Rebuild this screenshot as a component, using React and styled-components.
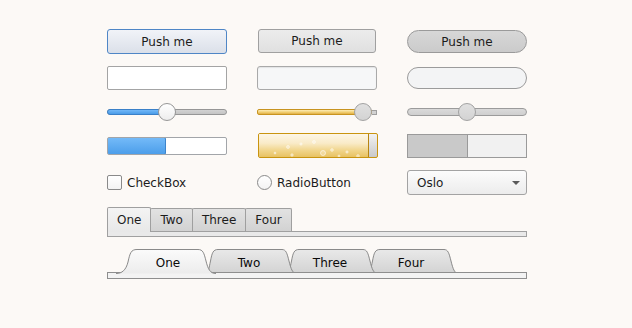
import React from "react";
import styled, { createGlobalStyle, css } from "styled-components";

const GlobalStyle = createGlobalStyle`
  html, body { margin: 0; background: #fcf9f6; }
  body {
    font-family: "DejaVu Sans", "Noto Sans", sans-serif;
    font-size: 12px;
    color: #1c1c1c;
  }
`;

const Page = styled.div`
  padding: 29px 0 0 107px;
  width: 420px;
`;

const Grid = styled.div`
  display: grid;
  grid-template-columns: repeat(3, 120px);
  grid-template-rows: 25px 24px 20px 24px 25px;
  column-gap: 30px;
  row-gap: 12px;
`;

/* ---------- buttons ---------- */
const Button = styled.button`
  font: inherit;
  color: #1c1c1c;
  padding: 0;
  margin: 0;
  width: 120px;
  box-sizing: border-box;
  ${({ $kind }) =>
    $kind === "focus"
      ? css`
          height: 25px;
          border: 1px solid #4f86c6;
          border-radius: 3px;
          background: linear-gradient(#f1f3f8, #dbe0e9);
        `
      : $kind === "flat"
      ? css`
          height: 24px;
          width: 118px;
          margin-left: 1px;
          border: 1px solid #a0a0a0;
          border-radius: 3px;
          background: linear-gradient(#ececec, #e0e0e0);
        `
      : css`
          height: 23px;
          margin-top: 1px;
          border: 1px solid #9a9a9a;
          border-radius: 12px;
          background: linear-gradient(#d7d7d7, #cbcbcb);
        `}
`;

/* ---------- line edits ---------- */
const LineEdit = styled.div`
  box-sizing: border-box;
  width: 120px;
  ${({ $kind }) =>
    $kind === "plain"
      ? css`
          height: 24px;
          border: 1px solid #a4a4a4;
          border-radius: 2px;
          background: #ffffff;
        `
      : $kind === "soft"
      ? css`
          height: 24px;
          border: 1px solid #a9a9a9;
          border-radius: 3px;
          background: #f6f7f8;
          box-shadow: inset 0 1px 1px rgba(0, 0, 0, 0.08);
        `
      : css`
          height: 22px;
          margin-top: 1px;
          border: 1px solid #9b9b9b;
          border-radius: 11px;
          background: #f3f4f5;
        `}
`;

/* ---------- sliders ---------- */
const SliderBody = styled.div`
  position: relative;
  height: 20px;
  display: flex;
  align-items: center;
`;

const Groove = styled.div`
  position: relative;
  box-sizing: border-box;
  flex: 1;
  ${({ $kind }) =>
    $kind === "blue"
      ? css`
          height: 6px;
          border: 1px solid #969696;
          border-radius: 3px;
          background: linear-gradient(#d2d2d2, #c4c4c4);
        `
      : $kind === "gold"
      ? css`
          height: 6px;
          border: 1px solid #c89420;
          border-radius: 2px;
          background: linear-gradient(#fcecb6, #f0cc6e 60%, #dfae45);
        `
      : css`
          height: 8px;
          border: 1px solid #9b9b9b;
          border-radius: 4px;
          background: linear-gradient(#dadada, #cfcfcf);
        `}
`;

const BlueFill = styled.div`
  position: absolute;
  left: -1px;
  top: -1px;
  bottom: -1px;
  box-sizing: border-box;
  border: 1px solid #3a80c8;
  border-radius: 3px;
  background: linear-gradient(#72b8f8, #4a9ce8);
`;

const Nub = styled.div`
  width: 5px;
  height: 5px;
  box-sizing: border-box;
  border: 1px solid #9f9f9f;
  border-left: none;
  background: #d2d2d2;
`;

const Handle = styled.div`
  position: absolute;
  top: 1px;
  width: 18px;
  height: 18px;
  box-sizing: border-box;
  border-radius: 50%;
  ${({ $kind }) =>
    $kind === "blue"
      ? css`
          border: 1px solid #979797;
          background: linear-gradient(#ffffff, #ededed);
        `
      : css`
          border: 1px solid #a2a2a2;
          background: linear-gradient(#e0e0e0, #d3d3d3);
        `}
`;

function Slider({ kind, value, width }) {
  const left = Math.round((width - 18) * value);
  return (
    <SliderBody>
      <Groove $kind={kind}>
        {kind === "blue" && <BlueFill style={{ width: left + 10 }} />}
      </Groove>
      {kind === "gold" && <Nub />}
      <Handle $kind={kind} style={{ left }} />
    </SliderBody>
  );
}

/* ---------- progress bars ---------- */
const Progress = styled.div`
  box-sizing: border-box;
  width: 120px;
  display: flex;
  overflow: hidden;
  ${({ $kind }) =>
    $kind === "blue"
      ? css`
          align-self: center;
          height: 18px;
          border: 1px solid #a2a5a9;
          border-radius: 2px;
          background: #ffffff;
        `
      : $kind === "gold"
      ? css`
          align-self: end;
          height: 25px;
          margin-left: 1px;
          border: 1px solid #c9940f;
          border-radius: 2px;
          background: linear-gradient(#f2f2f2, #c9c9c9);
        `
      : css`
          height: 24px;
          border: 1px solid #9a9a9a;
          background: #f1f1f1;
        `}
`;

const Chunk = styled.div`
  position: relative;
  box-sizing: border-box;
  height: 100%;
  ${({ $kind }) =>
    $kind === "blue"
      ? css`
          margin: -1px 0 -1px -1px;
          height: calc(100% + 2px);
          border: 1px solid #3d84cb;
          border-radius: 2px;
          background: linear-gradient(#74baf8, #4c9eea);
        `
      : $kind === "gold"
      ? css`
          border-right: 1px solid #b88510;
          background: linear-gradient(#fdf6e6, #f9ebc8 40%, #f1d68e 70%, #e8c262);
        `
      : css`
          border-right: 1px solid #9a9a9a;
          background: #c9c9c9;
        `}
`;

const Bubbles = styled.svg`
  position: absolute;
  inset: 0;
`;

const bubbleData = [
  [29, 13, 1.4], [42, 10, 1.1], [55, 8, 1.4], [64, 19, 2.5], [73, 16, 1.3],
  [88, 18, 1.1], [33, 21, 1.2], [99, 22, 1.3], [16, 19, 0.9], [80, 22, 1.0],
];

function GoldBubbles() {
  return (
    <Bubbles width="110" height="23" viewBox="0 0 110 23">
      {bubbleData.map(([x, y, r], i) => (
        <circle key={i} cx={x} cy={y} r={r} fill="rgba(255,250,235,0.3)" stroke="rgba(255,255,255,0.7)" strokeWidth="0.8" />
      ))}
    </Bubbles>
  );
}

/* ---------- check / radio / combo ---------- */
const Option = styled.label`
  display: flex;
  align-items: center;
  gap: 5px;
  align-self: center;
`;

const Box = styled.span`
  width: 15px;
  height: 15px;
  box-sizing: border-box;
  border: 1px solid #8a8a8a;
  background: linear-gradient(#ffffff, #f3f3f3);
  border-radius: ${({ $round }) => ($round ? "50%" : "2px")};
`;

const Combo = styled.div`
  box-sizing: border-box;
  height: 25px;
  display: flex;
  align-items: center;
  justify-content: space-between;
  padding: 0 6px 0 9px;
  border: 1px solid #a3a3a3;
  border-radius: 3px;
  background: linear-gradient(#fcfcfc, #ececec);
`;

const Arrow = styled.span`
  width: 0;
  height: 0;
  margin-top: 1px;
  border-left: 4px solid transparent;
  border-right: 4px solid transparent;
  border-top: 4px solid #5a5a5a;
`;

/* ---------- classic tab widget ---------- */
const TabWidget = styled.div`
  margin-top: 12px;
  width: 420px;
`;

const TabRow = styled.div`
  display: flex;
  align-items: flex-start;
  height: 24px;
`;

const Tab = styled.div`
  position: relative;
  box-sizing: border-box;
  padding: 0 9px;
  display: flex;
  align-items: center;
  justify-content: center;
  border: 1px solid #9f9f9f;
  border-bottom: none;
  border-radius: 2px 2px 0 0;
  & + & { margin-left: -1px; }
  ${({ $active }) =>
    $active
      ? css`
          z-index: 1;
          height: 25px;
          background: linear-gradient(#f4f4f4, #e8e8e8);
        `
      : css`
          height: 23px;
          margin-top: 1px;
          background: linear-gradient(#e2e2e2, #d2d2d2);
        `}
`;

const Pane = styled.div`
  box-sizing: border-box;
  height: 6px;
  border: 1px solid #a0a0a0;
  background: #e9e9e9;
`;

/* ---------- rounded tabs ---------- */
const RoundWidget = styled.div`
  margin-top: 12px;
  width: 420px;
`;

const RoundRow = styled.div`
  display: flex;
  height: 24px;
  padding-left: 18px;
`;

const RoundTab = styled.div`
  position: relative;
  width: 90px;
  height: 24px;
  flex: none;
  display: flex;
  align-items: center;
  justify-content: center;
  padding: 3px 4px 0 0;
  box-sizing: border-box;
  color: #0a0a0a;
  z-index: ${({ $z }) => $z};
  & + & { margin-left: -9px; }
`;

const TabShape = styled.svg`
  position: absolute;
  left: -10px;
  top: 0;
  overflow: visible;
`;

const RoundLabel = styled.span`
  position: relative;
`;

const BaseBar = styled.div`
  position: relative;
  z-index: 5;
  box-sizing: border-box;
  height: 7px;
  margin-top: -1px;
  border: 1px solid #8e8e8e;
  background: #f3f3f3;
`;

function RoundTabItem({ label, active, z, id }) {
  const o = 10;
  const fillId = `g-${id}`;
  const outline = active
    ? `M ${o - 9} 24.5 C ${o - 3} 24.5 ${o + 1} 21 ${o + 3} 13 C ${o + 5} 4 ${o + 6} 0.5 ${o + 12} 0.5 L ${o + 73} 0.5 C ${o + 78} 0.5 ${o + 79} 4 ${o + 81} 12 C ${o + 83} 20 ${o + 85} 24.5 ${o + 91} 24.5`
    : `M ${o + 0.5} 24 C ${o + 2.5} 24 ${o + 3} 19 ${o + 4.5} 12 C ${o + 6} 4 ${o + 7} 0.5 ${o + 12} 0.5 L ${o + 76} 0.5 C ${o + 80} 0.5 ${o + 81} 4 ${o + 83} 12 C ${o + 85} 20 ${o + 86.5} 24 ${o + 89.5} 24`;
  return (
    <RoundTab $z={active ? 10 : z}>
      <TabShape width="110" height="26" viewBox="0 0 110 26">
        <defs>
          <linearGradient id={fillId} x1="0" y1="0" x2="0" y2="1">
            {active ? (
              <>
                <stop offset="0" stopColor="#fbfbfb" />
                <stop offset="1" stopColor="#ececec" />
              </>
            ) : (
              <>
                <stop offset="0" stopColor="#e9e9e9" />
                <stop offset="1" stopColor="#d3d3d3" />
              </>
            )}
          </linearGradient>
        </defs>
        {active && <path d={`M ${o - 8} 24 L ${o + 90} 24 L ${o + 90} 26 L ${o - 8} 26 Z`} fill="#f3f3f3" />}
        <path d={`${outline} Z`} fill={`url(#${fillId})`} />
        <path d={outline} fill="none" stroke="#8a8a8a" strokeWidth="1" />
      </TabShape>
      <RoundLabel>{label}</RoundLabel>
    </RoundTab>
  );
}

export default function App() {
  return (
    <>
      <GlobalStyle />
      <Page>
        <Grid>
          <Button $kind="focus">Push me</Button>
          <Button $kind="flat">Push me</Button>
          <Button $kind="pill">Push me</Button>

          <LineEdit $kind="plain" />
          <LineEdit $kind="soft" />
          <LineEdit $kind="pill" />

          <Slider kind="blue" value={0.5} width={120} />
          <Slider kind="gold" value={0.95} width={120} />
          <Slider kind="grey" value={0.5} width={120} />

          <Progress $kind="blue">
            <Chunk $kind="blue" style={{ width: "50%" }} />
          </Progress>
          <Progress $kind="gold">
            <Chunk $kind="gold" style={{ width: 110 }}>
              <GoldBubbles />
            </Chunk>
          </Progress>
          <Progress $kind="grey">
            <Chunk $kind="grey" style={{ width: 60 }} />
          </Progress>

          <Option>
            <Box />
            CheckBox
          </Option>
          <Option>
            <Box $round />
            RadioButton
          </Option>
          <Combo>
            Oslo
            <Arrow />
          </Combo>
        </Grid>

        <TabWidget>
          <TabRow>
            <Tab $active>One</Tab>
            <Tab>Two</Tab>
            <Tab>Three</Tab>
            <Tab>Four</Tab>
          </TabRow>
          <Pane />
        </TabWidget>

        <RoundWidget>
          <RoundRow>
            <RoundTabItem id="a" label="One" active z={4} />
            <RoundTabItem id="b" label="Two" z={3} />
            <RoundTabItem id="c" label="Three" z={2} />
            <RoundTabItem id="d" label="Four" z={1} />
          </RoundRow>
          <BaseBar />
        </RoundWidget>
      </Page>
    </>
  );
}
